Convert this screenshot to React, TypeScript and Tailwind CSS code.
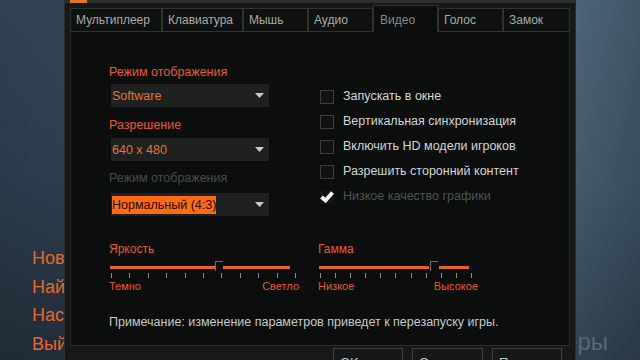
import type { ReactNode } from 'react'

const FONT = { fontFamily: '"Liberation Sans", Arial, sans-serif' }

const tabs = [
  { name: 'Мультиплеер', w: 'w-[92px]' },
  { name: 'Клавиатура', w: 'w-[81px]' },
  { name: 'Мышь', w: 'w-[65px]' },
  { name: 'Аудио', w: 'w-[65px]' },
  { name: 'Видео', w: 'w-[65px]', active: true },
  { name: 'Голос', w: 'w-[65px]' },
  { name: 'Замок', w: 'w-[67px]' },
]

const checks = [
  { label: 'Запускать в окне' },
  { label: 'Вертикальная синхронизация' },
  { label: 'Включить HD модели игроков' },
  { label: 'Разрешить сторонний контент' },
  { label: 'Низкое качество графики', checked: true, disabled: true },
]

function Arrow() {
  return (
    <svg width="9" height="5" viewBox="0 0 9 5">
      <polygon points="0,0 9,0 4.5,5" fill="#c9cdc9" />
    </svg>
  )
}

function Dropdown({ children }: { children: ReactNode }) {
  return (
    <div className="ml-[2px] flex h-[23px] w-[158px] items-center justify-between bg-[#1e211f] pl-[1px] pr-[5px]">
      {children}
      <Arrow />
    </div>
  )
}

function Checkbox({ checked }: { checked?: boolean }) {
  if (checked) {
    return (
      <div className="flex h-[14px] w-[14px] items-center justify-center bg-[#101311]">
        <svg width="14" height="14" viewBox="0 0 14 14">
          <path d="M1.5 7 L5.5 10.5 L12.5 2.5" fill="none" stroke="#f4f4f4" strokeWidth="4" strokeLinejoin="miter" />
        </svg>
      </div>
    )
  }
  return <div className="h-[14px] w-[14px] border border-[#3b3f3c] bg-[#101311]" />
}

function Slider({
  label,
  low,
  high,
  width,
  trackW,
  thumbAt,
  ticksW,
  gap,
}: {
  label: string
  low: string
  high: string
  width: string
  trackW: number
  thumbAt: number
  ticksW: string
  gap?: boolean
}) {
  return (
    <div className={`${width} flex flex-col`}>
      <div className="h-[14px] text-[12px] leading-[14px] text-[#ea5a2c]">{label}</div>
      <div className="relative ml-[1px] mt-[5px] h-[12px]" style={{ width: trackW }}>
        <div className="absolute left-0 top-[5px] h-[3px] bg-[#e8621f]" style={{ width: gap ? thumbAt - 1 : thumbAt }} />
        <div
          className="absolute top-[5px] h-[3px] bg-[#e8621f]"
          style={{ left: thumbAt + (gap ? 9 : 8), right: 0 }}
        />
        <div
          className="absolute top-0 h-[10px] w-[8px] border-l border-t border-[#6a6e6a] bg-[#0c0f0d]"
          style={{ left: thumbAt }}
        />
      </div>
      <div className={`ml-[2px] flex h-[5px] justify-between ${ticksW}`}>
        {Array.from({ length: 11 }).map((_, i) => (
          <div key={i} className="h-[5px] w-[1px] bg-[#8c908c]" />
        ))}
      </div>
      <div className="mt-[1px] flex h-[14px] justify-between text-[11px] leading-[14px] text-[#e45a2c]">
        <span>{low}</span>
        <span>{high}</span>
      </div>
    </div>
  )
}

export default function App() {
  return (
    <div
      className="relative h-[360px] w-[640px] overflow-hidden bg-[linear-gradient(90deg,#2f4152_0%,#3a4f62_40%,#4b6578_90%,#3f5668_100%)]"
      style={FONT}
    >
      <div className="absolute inset-0 bg-[linear-gradient(180deg,rgba(0,0,0,0)_0%,rgba(0,0,0,0.1)_50%,rgba(0,0,0,0.35)_100%)]" />

      {/* main menu behind the dialog */}
      <div className="absolute left-[32px] top-[244px] flex flex-col text-[18px] leading-[28.5px] text-[#e8652b]">
        <span>Новая игра</span>
        <span>Найти сервер</span>
        <span>Настройки</span>
        <span>Выйти</span>
      </div>
      <div className="absolute right-[32px] top-[330px] text-[24px] leading-[24px] text-[#5a6773]">Серверы</div>

      {/* options dialog */}
      <div className="absolute left-[64px] top-[-20px] flex h-[400px] w-[512px] flex-col border-x border-[#2a2e2c] bg-[#161918]">
        <div className="flex h-[23px] items-end bg-[#2b302e] px-[5px]">
          <div className="h-[3px] w-[17px] bg-[#e07a22]" />
        </div>

        <div className="mx-[5px] flex h-[29px] items-end">
          {tabs.map((t) =>
            t.active ? (
              <div
                key={t.name}
                className={`${t.w} flex h-[27px] items-start border-x border-t border-[#2e332f] bg-[#0b0e0c] pl-[6px] pt-[5px] text-[12px] text-[#868c87]`}
              >
                {t.name}
              </div>
            ) : (
              <div
                key={t.name}
                className={`${t.w} flex h-[24px] items-center border border-[#2e332f] bg-[#0e110f] pl-[5px] text-[12px] text-[#a6aca7]`}
              >
                {t.name}
              </div>
            ),
          )}
        </div>

        <div className="mx-[5px] flex h-[314px] flex-col border-x border-b border-[#2a2f2b] bg-[#0b0e0c]">
          <div className="flex pl-[38px] pt-[33px]">
            <div className="flex w-[211px] flex-col text-[12.5px] leading-[14px]">
              <div className="text-[#ea5a2c]">Режим отображения</div>
              <div className="mt-[5px]">
                <Dropdown>
                  <span className="text-[#e4742e]">Software</span>
                </Dropdown>
              </div>
              <div className="mt-[11px] text-[#ea5a2c]">Разрешение</div>
              <div className="mt-[6px]">
                <Dropdown>
                  <span className="text-[#e4742e]">640 x 480</span>
                </Dropdown>
              </div>
              <div className="mt-[10px] text-[#474c48]">Режим отображения</div>
              <div className="mt-[8px]">
                <Dropdown>
                  <span className="bg-[#ff6a12] py-[2px] text-[#1a0c04]">Нормальный (4:3)</span>
                </Dropdown>
              </div>
            </div>

            <div className="mt-[19px] flex flex-col">
              {checks.map((c) => (
                <div key={c.label} className="flex h-[25px] items-center gap-[9px]">
                  <Checkbox checked={c.checked} />
                  <span className={`text-[12.5px] ${c.disabled ? 'text-[#4f5450]' : 'text-[#d3d7d3]'}`}>
                    {c.label}
                  </span>
                </div>
              ))}
            </div>
          </div>

          <div className="mt-[26px] flex gap-[19px] pl-[38px]">
            <Slider
              label="Яркость"
              low="Темно"
              high="Светло"
              width="w-[190px]"
              trackW={180}
              thumbAt={105}
              ticksW="w-[185px]"
            />
            <Slider
              label="Гамма"
              low="Низкое"
              high="Высокое"
              width="w-[160px]"
              trackW={150}
              thumbAt={111}
              ticksW="w-[152px]"
              gap
            />
          </div>

          <div className="mt-[22px] pl-[38px] text-[12.5px] leading-[14px] text-[#c6cac6]">
            Примечание: изменение параметров приведет к перезапуску игры.
          </div>
        </div>

        <div className="mt-[2px] flex gap-[9px] pl-[268px]">
          {['OK', 'Отмена', 'Применить'].map((b, i) => (
            <div
              key={b}
              className={`${i === 1 ? 'w-[71px]' : 'w-[70px]'} h-[24px] border border-[#3d423e] bg-[#151817] pl-[6px] pt-[7px] text-[13px] leading-[14px] text-[#c3c7c3]`}
            >
              {b}
            </div>
          ))}
        </div>
      </div>
    </div>
  )
}
